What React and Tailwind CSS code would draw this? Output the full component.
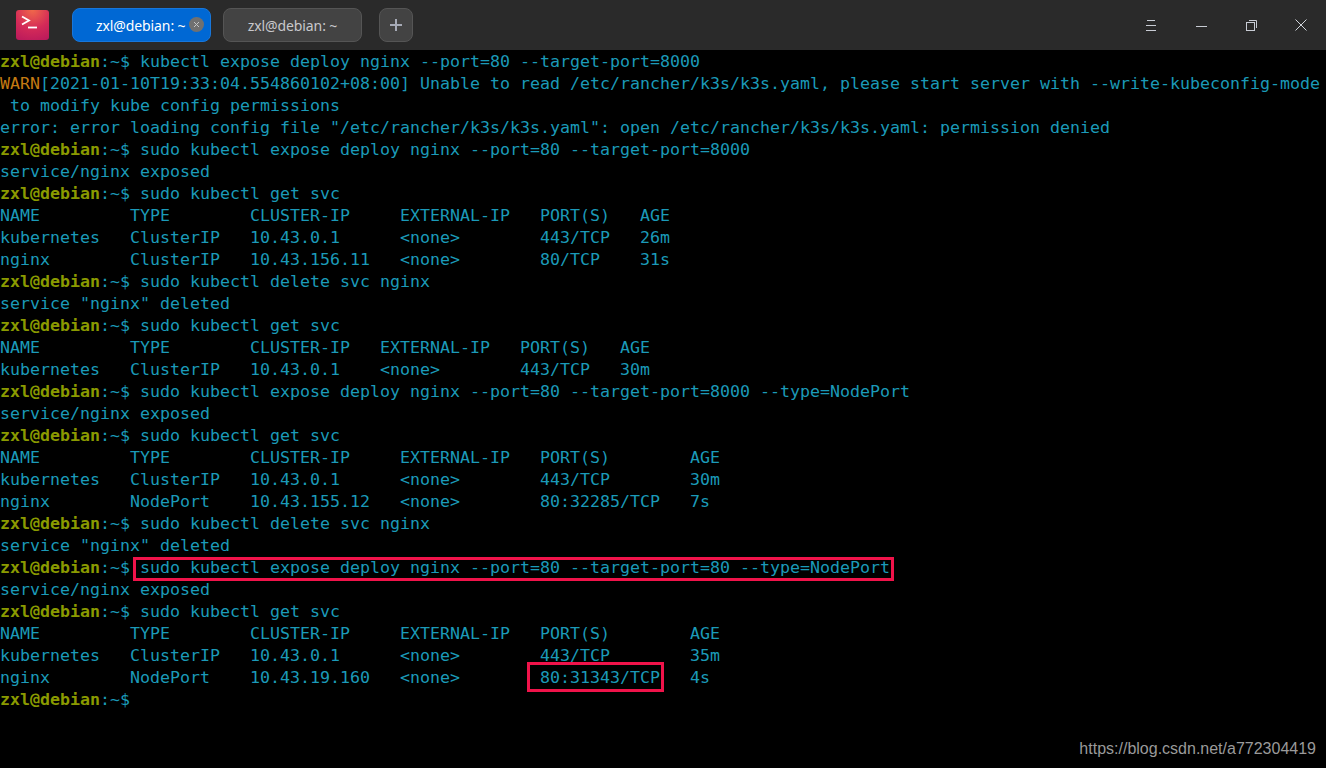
import React from "react";

const prompt = "sudo kubectl";

const lines = [
  { p: true, t: "kubectl expose deploy nginx --port=80 --target-port=8000" },
  { warn: true, t: "[2021-01-10T19:33:04.554860102+08:00] Unable to read /etc/rancher/k3s/k3s.yaml, please start server with --write-kubeconfig-mode" },
  { t: " to modify kube config permissions" },
  { t: 'error: error loading config file "/etc/rancher/k3s/k3s.yaml": open /etc/rancher/k3s/k3s.yaml: permission denied' },
  { p: true, t: `${prompt} expose deploy nginx --port=80 --target-port=8000` },
  { t: "service/nginx exposed" },
  { p: true, t: `${prompt} get svc` },
  { t: "NAME         TYPE        CLUSTER-IP     EXTERNAL-IP   PORT(S)   AGE" },
  { t: "kubernetes   ClusterIP   10.43.0.1      <none>        443/TCP   26m" },
  { t: "nginx        ClusterIP   10.43.156.11   <none>        80/TCP    31s" },
  { p: true, t: `${prompt} delete svc nginx` },
  { t: 'service "nginx" deleted' },
  { p: true, t: `${prompt} get svc` },
  { t: "NAME         TYPE        CLUSTER-IP   EXTERNAL-IP   PORT(S)   AGE" },
  { t: "kubernetes   ClusterIP   10.43.0.1    <none>        443/TCP   30m" },
  { p: true, t: `${prompt} expose deploy nginx --port=80 --target-port=8000 --type=NodePort` },
  { t: "service/nginx exposed" },
  { p: true, t: `${prompt} get svc` },
  { t: "NAME         TYPE        CLUSTER-IP     EXTERNAL-IP   PORT(S)        AGE" },
  { t: "kubernetes   ClusterIP   10.43.0.1      <none>        443/TCP        30m" },
  { t: "nginx        NodePort    10.43.155.12   <none>        80:32285/TCP   7s" },
  { p: true, t: `${prompt} delete svc nginx` },
  { t: 'service "nginx" deleted' },
  { p: true, t: `${prompt} expose deploy nginx --port=80 --target-port=80 --type=NodePort` },
  { t: "service/nginx exposed" },
  { p: true, t: `${prompt} get svc` },
  { t: "NAME         TYPE        CLUSTER-IP     EXTERNAL-IP   PORT(S)        AGE" },
  { t: "kubernetes   ClusterIP   10.43.0.1      <none>        443/TCP        35m" },
  { t: "nginx        NodePort    10.43.19.160   <none>        80:31343/TCP   4s" },
  { p: true, t: "" },
];

const Line = ({ line }) => (
  <div className="h-[22px] leading-[22px] whitespace-pre">
    {line.p && (
      <>
        <span className="font-bold text-[#8a9a00]">zxl@debian</span>
        <span>:~$ </span>
      </>
    )}
    {line.warn && <span className="text-[#c47a12]">WARN</span>}
    {line.t}
  </div>
);

const App = () => {
  return (
    <div className="h-[768px] w-full overflow-hidden bg-black flex flex-col">
      {/* Title bar */}
      <div className="h-[50px] shrink-0 bg-[#2a2a2a] flex items-center font-['Noto_Sans',sans-serif] text-[14px]">
        <div className="ml-[16px] w-[33px] h-[30px] rounded-[3px] bg-[radial-gradient(circle_at_50%_0%,#f0684a,#d42a58_55%,#b8185c)] flex">
          <svg width="33" height="30" viewBox="0 0 33 30" fill="none" stroke="white" strokeWidth="1.8">
            <path d="M6 6.5l7 4-7 4" />
            <path d="M12 17.5h9" />
          </svg>
        </div>
        <div className="ml-[23px] w-[139px] h-[34px] rounded-lg bg-[#0068d4] border border-[#1877db] text-white flex items-center relative">
          <span className="ml-[23px] tracking-[-0.1px]">zxl@debian: ~</span>
          <span className="absolute right-[6px] top-[8px] w-[15px] h-[15px] rounded-full bg-[#707070] flex items-center justify-center">
            <svg width="7" height="7" viewBox="0 0 7 7" stroke="#c4c4c4" strokeWidth="1">
              <path d="M1 1l5 5M6 1l-5 5" />
            </svg>
          </span>
        </div>
        <div className="ml-[12px] w-[139px] h-[34px] rounded-lg bg-[#434343] border border-[#555555] text-[#c8c8cc] flex items-center justify-center tracking-[-0.1px]">
          zxl@debian: ~
        </div>
        <div className="ml-[17px] w-[34px] h-[34px] rounded-lg bg-[#434343] border border-[#555555] flex items-center justify-center">
          <svg width="12" height="12" viewBox="0 0 12 12" stroke="#a6aab6" strokeWidth="2">
            <path d="M6 0v12M0 6h12" />
          </svg>
        </div>
        <div className="ml-auto flex items-center">
          <svg width="11" height="11" viewBox="0 0 11 11" stroke="#c8ccd4" strokeWidth="1" className="mr-[39px]">
            <path d="M1 .5h8M0 5.5h10M0 10.5h10" />
          </svg>
          <svg width="11" height="11" viewBox="0 0 11 11" stroke="#c8ccd4" strokeWidth="1" className="mr-[39px]">
            <path d="M0 6.5h11" />
          </svg>
          <svg width="11" height="11" viewBox="0 0 11 11" fill="none" stroke="#c8ccd4" strokeWidth="1" className="mr-[38px]">
            <rect x=".5" y="2.5" width="8" height="8" />
            <path d="M3 .5h7.5v7.5" />
          </svg>
          <svg width="12" height="12" viewBox="0 0 12 12" stroke="#d0d4da" strokeWidth="1" className="mr-[19px]">
            <path d="M.5.5l11 11M11.5.5l-11 11" />
          </svg>
        </div>
      </div>

      {/* Terminal */}
      <div className="relative flex-1 pt-px font-['DejaVu_Sans_Mono',monospace] text-[16.61px] text-[#1b9ab8]">
        {lines.map((line, i) => (
          <Line key={i} line={line} />
        ))}

        {/* Annotation boxes */}
        <div className="absolute left-[133px] top-[507px] w-[761px] h-[24px] border-[3px] border-[#f0134a]" />
        <div className="absolute left-[527px] top-[612px] w-[137px] h-[30px] border-[3px] border-[#f0134a]" />

        <div className="absolute right-[10px] bottom-[9px] font-['Liberation_Sans',sans-serif] text-[16px] leading-[20px] text-[#9a9a9a]">
          https://blog.csdn.net/a772304419
        </div>
      </div>
    </div>
  );
};

export default App;
